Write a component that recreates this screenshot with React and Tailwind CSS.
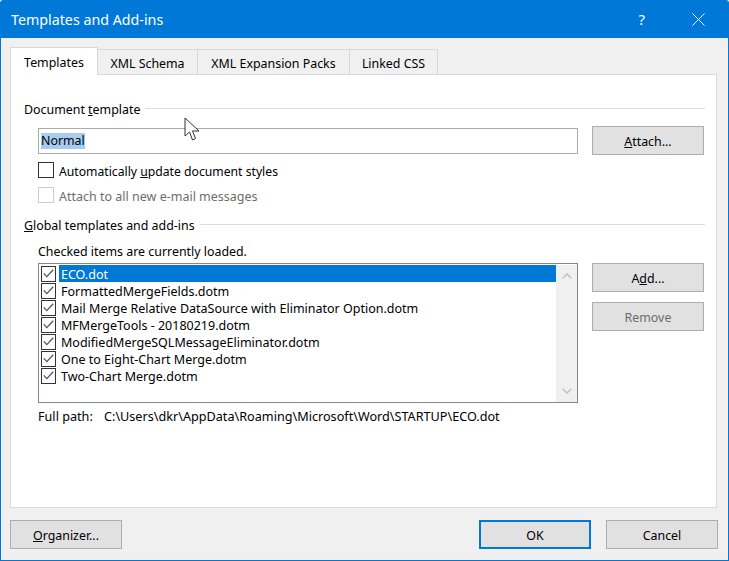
import React from 'react'

const font = "font-['Noto_Sans','Open_Sans',sans-serif]"

const Btn = ({ children, disabled, primary }) => (
  <button className={`h-[29px] w-[112px] shrink-0 bg-[#e1e1e1] pt-[4px] text-[12.4px] ${primary ? 'border-2 border-[#0078d7]' : 'border border-[#adadad]'} ${disabled ? 'text-[#6d6d6d]' : 'text-black'}`}>
    {children}
  </button>
)

const CheckMark = () => (
  <svg width="11" height="9" viewBox="0 0 11 9" fill="none">
    <path d="M0.8 4.4 L3.8 7.6 L10.2 0.8" stroke="#555" strokeWidth="1.3" />
  </svg>
)

const ListRow = ({ name, selected }) => (
  <div className="flex h-[17px] items-center">
    <div className="flex h-[16px] w-[15px] shrink-0 items-center justify-center border border-[#333] bg-white">
      <CheckMark />
    </div>
    <div className={`ml-[3px] h-[17px] flex-1 pl-[2px] text-[12.5px] leading-[20px] ${selected ? 'bg-[#0078d7] text-white' : 'text-black'}`}>
      {name}
    </div>
  </div>
)

const SectionHead = ({ children }) => (
  <div className="flex h-[18px] items-center gap-[5px] text-[12.4px] text-black">
    <span className="whitespace-nowrap">{children}</span>
    <div className="mb-[4px] h-px flex-1 bg-[#dcdcdc]" />
  </div>
)

const Tab = ({ children, width, active }) => (
  <div
    className={
      active
        ? 'z-10 -mb-px flex h-[28px] w-[88px] items-center justify-center border border-b-0 border-[#d9d9d9] bg-white pt-[3px] text-[12.4px]'
        : `flex h-[25px] ${width} items-center justify-center border border-l-0 border-b-0 border-[#d9d9d9] bg-[#f0f0f0] pt-[4px] text-[12.4px]`
    }
  >
    {children}
  </div>
)

const files = [
  'ECO.dot',
  'FormattedMergeFields.dotm',
  'Mail Merge Relative DataSource with Eliminator Option.dotm',
  'MFMergeTools - 20180219.dotm',
  'ModifiedMergeSQLMessageEliminator.dotm',
  'One to Eight-Chart Merge.dotm',
  'Two-Chart Merge.dotm',
]

const App = () => {
  return (
    <div className={`${font} relative flex h-[561px] w-[729px] flex-col overflow-hidden rounded-t-[3px] border-x-[1.5px] border-b border-[#0078d7] bg-[#f0f0f0] text-black`}>
      <header className="flex h-[38px] shrink-0 items-center bg-[#0078d7] pl-[10px] text-white">
        <span className="flex-1 pt-[2px] text-[14.25px]">Templates and Add-ins</span>
        <span className="mr-[47px] text-[15px]">?</span>
        <svg className="mr-[23px]" width="13" height="13" viewBox="0 0 13 13" fill="none">
          <path d="M0.5 0.5 L12.5 12.5 M12.5 0.5 L0.5 12.5" stroke="#fff" strokeWidth="1" />
        </svg>
      </header>

      <div className="mt-[9px] flex items-end pl-[9px]">
        <Tab active>Templates</Tab>
        <Tab width="w-[100px]">XML Schema</Tab>
        <Tab width="w-[152px]">XML Expansion Packs</Tab>
        <Tab width="w-[88px]">Linked CSS</Tab>
      </div>

      <main className="ml-[9px] mr-[11px] h-[434px] border border-[#d9d9d9] bg-white pl-[13px] pr-[11px] pt-[26px]">
        <SectionHead>Document <u>t</u>emplate</SectionHead>

        <div className="mr-[1px] mt-[7px] flex items-center pl-[14px]">
          <div className="flex h-[26px] flex-1 items-center border border-[#ababab] pl-[2px] pt-[1px] text-[12.4px]">
            <span className="bg-[#a6cdf0] leading-[16px]">Normal</span>
          </div>
          <div className="ml-[14px]">
            <Btn><u>A</u>ttach...</Btn>
          </div>
        </div>

        <div className="mt-[7px] flex h-[16px] items-center pl-[14px] text-[12.2px]">
          <div className="h-[16px] w-[16px] border border-[#333]" />
          <span className="ml-[5px] pt-[5px]">Automatically <u>u</u>pdate document styles</span>
        </div>
        <div className="mt-[9px] flex h-[16px] items-center pl-[14px] text-[12.5px] text-[#6d6d6d]">
          <div className="h-[16px] w-[16px] border border-[#cccccc]" />
          <span className="ml-[5px] pt-[5px]">Attach to all new e-mail messages</span>
        </div>

        <div className="mt-[14px]">
          <SectionHead><u>G</u>lobal templates and add-ins</SectionHead>
        </div>

        <div className="mt-[8px] h-[18px] pl-[14px] text-[12.4px] leading-[18px]">Checked items are currently loaded.</div>

        <div className="mr-[1px] mt-[2px] flex pl-[14px]">
          <div className="flex h-[140px] flex-1 border border-[#828790] pl-[2px] pt-[1px]">
            <div className="flex-1">
              {files.map((f, i) => (
                <ListRow key={f} name={f} selected={i === 0} />
              ))}
            </div>
            <div className="flex w-[21px] flex-col items-center justify-between bg-[#f0f0f0] py-[8px]">
              <svg width="10" height="6" viewBox="0 0 10 6" fill="none"><path d="M0.7 5.3 L5 1 L9.3 5.3" stroke="#c0c0c0" strokeWidth="1.5" /></svg>
              <svg width="10" height="6" viewBox="0 0 10 6" fill="none"><path d="M0.7 0.7 L5 5 L9.3 0.7" stroke="#c0c0c0" strokeWidth="1.5" /></svg>
            </div>
          </div>
          <div className="ml-[14px] flex flex-col gap-[10px]">
            <Btn>A<u>d</u>d...</Btn>
            <Btn disabled>Remove</Btn>
          </div>
        </div>

        <div className="mt-[4px] flex h-[18px] items-center pl-[14px] text-[12.65px]">
          <span className="w-[66px]">Full path:</span>
          <span>C:\Users\dkr\AppData\Roaming\Microsoft\Word\STARTUP\ECO.dot</span>
        </div>
      </main>

      <footer className="mt-[12px] flex pl-[9px] pr-[10px]">
        <Btn><u>O</u>rganizer...</Btn>
        <div className="flex-1" />
        <Btn primary>OK</Btn>
        <div className="w-[15px]" />
        <Btn>Cancel</Btn>
      </footer>

      <svg className="absolute left-[182.5px] top-[117px]" width="17" height="26" viewBox="0 0 17 26" fill="none">
        <path d="M1 1 V19 L5.5 15 L8.5 23 L11.5 21.5 L8.5 14 H15 Z" fill="#fff" stroke="#333" strokeWidth="1" />
      </svg>
    </div>
  )
}

export default App
